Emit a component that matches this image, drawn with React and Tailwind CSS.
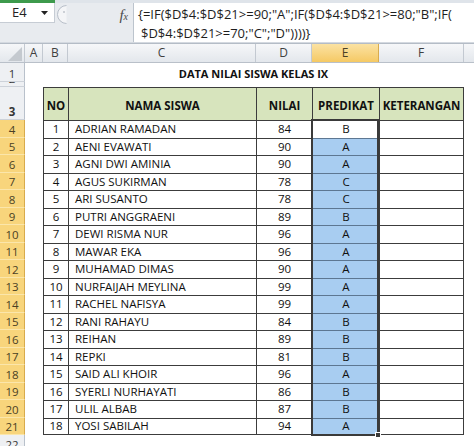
import React from 'react';

const FONT = "font-['Open_Sans','Liberation_Sans',sans-serif]";

const students = [
  [1, 'ADRIAN RAMADAN', 84, 'B'],
  [2, 'AENI EVAWATI', 90, 'A'],
  [3, 'AGNI DWI AMINIA', 90, 'A'],
  [4, 'AGUS SUKIRMAN', 78, 'C'],
  [5, 'ARI SUSANTO', 78, 'C'],
  [6, 'PUTRI ANGGRAENI', 89, 'B'],
  [7, 'DEWI RISMA NUR', 96, 'A'],
  [8, 'MAWAR EKA', 96, 'A'],
  [9, 'MUHAMAD DIMAS', 90, 'A'],
  [10, 'NURFAIJAH MEYLINA', 99, 'A'],
  [11, 'RACHEL NAFISYA', 99, 'A'],
  [12, 'RANI RAHAYU', 84, 'B'],
  [13, 'REIHAN', 89, 'B'],
  [14, 'REPKI', 81, 'B'],
  [15, 'SAID ALI KHOIR', 96, 'A'],
  [16, 'SYERLI NURHAYATI', 86, 'B'],
  [17, 'ULIL ALBAB', 87, 'B'],
  [18, 'YOSI SABILAH', 94, 'A'],
];

const columns = [
  { key: 'A', w: 'w-[18px]' },
  { key: 'B', w: 'w-[25px]' },
  { key: 'C', w: 'w-[188px]' },
  { key: 'D', w: 'w-[56px]' },
  { key: 'E', w: 'w-[67px]', active: true },
  { key: 'F', w: 'w-[85px]' },
];

function RowHead({ n, active }) {
  return (
    <div
      className={`w-[25px] shrink-0 h-full flex items-end justify-center leading-[15px] text-[11.5px] overflow-hidden border-r border-b ${
        active
          ? 'bg-[#f8d57c] text-[#4a3f24] border-b-[#fbe6ab] border-r-[#d8ab4c]'
          : 'bg-[#eef0f3] text-[#363636] border-b-[#cdd2d9] border-r-[#b9c1cb]'
      }`}
    >
      {n}
    </div>
  );
}

function FormulaBar() {
  return (
    <div>
      <div className="h-[3px] flex">
        <div className="w-[55px] bg-[#3d9a4c]" />
        <div className="flex-1 bg-[#dfe4ea]" />
      </div>
      <div className="flex h-[39px] bg-[#e8ebef]">
        <div className="w-[55px] flex flex-col">
          <div className="h-[20px] bg-white flex items-center justify-between pl-[12px] pr-[6px] border-r border-b border-[#c6ccd4]">
            <span className="text-[13px] text-[#222]">E4</span>
            <svg width="7" height="4" viewBox="0 0 7 4">
              <path d="M0 0 L7 0 L3.5 4 Z" fill="#222" />
            </svg>
          </div>
        </div>
        <div className="w-[12px] flex items-start pt-[2px] pl-[2px]">
          <svg width="10" height="19" viewBox="0 0 10 19">
            <path d="M9.5 0.5 A9 9 0 0 0 9.5 18.5" fill="#f4f5f7" stroke="#b7bec8" />
            <circle cx="7" cy="7" r="0.8" fill="#9aa3ae" />
          </svg>
        </div>
        <div className="w-[66px] flex justify-end items-start pt-[5px] pr-[5px]">
          <span className="font-['Liberation_Serif',serif] italic text-[15px] leading-[15px] text-[#4a4a4a]">
            f<span className="text-[10px]">x</span>
          </span>
        </div>
        <div className="flex-1 bg-white border-l border-[#bcc4cd] pl-[4px] pt-[2px] text-[13px] leading-[19px] text-[#1e1e1e] whitespace-nowrap overflow-hidden">
          <div>{'{=IF($D$4:$D$21>=90;"A";IF($D$4:$D$21>=80;"B";IF('}</div>
          <div className="pl-[3px]">{'$D$4:$D$21>=70;"C";"D"))))}'}</div>
        </div>
      </div>
      <div className="h-[1px] bg-[#d4d9e0]" />
      <div className="h-[1px] bg-[#b4bcc6]" />
    </div>
  );
}

function ColumnHeaders() {
  return (
    <div className="flex h-[19px] border-b border-[#b9c0c9] text-[12px] text-[#3f3f3f]">
      <div className="w-[25px] shrink-0 bg-linear-to-b from-[#f6f7f9] to-[#e3e7ec] border-r border-[#c3c9d1] flex items-end justify-end pr-[2px] pb-[1px]">
        <svg width="14" height="14" viewBox="0 0 14 14">
          <path d="M14 0 L14 14 L0 14 Z" fill="#c4c9cf" />
        </svg>
      </div>
      {columns.map((c) => (
        <div
          key={c.key}
          className={`${c.w} shrink-0 flex items-center justify-center border-r ${
            c.active
              ? 'bg-linear-to-b from-[#fbe2a2] to-[#f5c963] border-[#d9ac4e] text-[#4a3f24]'
              : 'bg-linear-to-b from-[#f6f7f9] to-[#e3e7ec] border-[#c3c9d1]'
          }`}
        >
          {c.key}
        </div>
      ))}
      <div className="flex-1 bg-linear-to-b from-[#f6f7f9] to-[#e3e7ec]" />
    </div>
  );
}

function Sheet() {
  const line = 'border-[#3c3c3c]';
  return (
    <div className="relative text-[11.5px] text-[#111]">
      {/* row 1 */}
      <div className="flex h-[19px]">
        <RowHead n={1} />
        <div className="w-[18px] shrink-0" />
        <div className="w-[421px] shrink-0 flex items-end justify-center pb-[1.5px] leading-[15px] text-[11px] font-bold">
          DATA NILAI SISWA KELAS IX
        </div>
        <div className="flex-1" />
      </div>
      {/* row 2, squeezed to a sliver */}
      <div className="flex h-[5px]">
        <RowHead n={2} />
        <div className="flex-1" />
      </div>
      {/* row 3 header */}
      <div className="flex h-[33px] font-bold">
        <RowHead n={3} />
        <div className="w-[18px] shrink-0" />
        <div className={`w-[25px] shrink-0 border-l border-t ${line} bg-[#d7e4bd] flex items-end justify-center pb-[7px] leading-[15px]`}>NO</div>
        <div className={`w-[188px] shrink-0 border-l border-t ${line} bg-[#d7e4bd] flex items-end justify-center pb-[7px] leading-[15px]`}>NAMA SISWA</div>
        <div className={`w-[56px] shrink-0 border-l border-t ${line} bg-[#d7e4bd] flex items-end justify-center pb-[7px] leading-[15px]`}>NILAI</div>
        <div className={`w-[67px] shrink-0 border-l border-t ${line} bg-[#d7e4bd] flex items-end justify-center pb-[7px] leading-[15px]`}>PREDIKAT</div>
        <div className={`w-[85px] shrink-0 border-l border-r border-t ${line} bg-[#d7e4bd] flex items-end justify-center pb-[7px] leading-[15px]`}>KETERANGAN</div>
        <div className="flex-1" />
      </div>
      {/* data rows */}
      {students.map(([no, name, score, grade], i) => {
        const last = i === students.length - 1;
        const bottom = last ? 'border-b' : '';
        const cell = `shrink-0 h-full flex items-end leading-[15px] pb-[1.5px] border-l border-t ${line} ${bottom}`;
        return (
          <div key={no} className="flex h-[17.5px]">
            <RowHead n={i + 4} active />
            <div className="w-[18px] shrink-0" />
            <div className={`w-[25px] justify-center ${cell}`}>{no}</div>
            <div className={`w-[188px] pl-[6px] ${cell}`}>{name}</div>
            <div className={`w-[56px] justify-center ${cell}`}>{score}</div>
            <div
              className={`w-[67px] justify-center shrink-0 h-full flex items-end leading-[15px] pb-[1.5px] border-l border-t ${bottom} ${
                i === 0 ? 'bg-white border-[#3c3c3c]' : 'bg-[#a8cdf1] border-l-[#3c3c3c] border-t-[#5d7792] border-b-[#3c3c3c]'
              }`}
            >
              {grade}
            </div>
            <div className={`w-[85px] border-r ${cell}`} />
            <div className="flex-1" />
          </div>
        );
      })}
      {/* row 22 */}
      <div className="flex h-[17.5px]">
        <RowHead n={22} />
        <div className="flex-1" />
      </div>

      {/* selection outline E4:E21 */}
      <div className="absolute left-[311px] top-[56px] w-[68px] h-[317px] border-2 border-[#3a3a3a] pointer-events-none">
        <div className="absolute -right-[4px] -bottom-[4px] w-[6px] h-[6px] bg-[#3a3a3a] border border-white" />
      </div>
    </div>
  );
}

export default function App() {
  return (
    <div className={`w-[474px] h-[446px] overflow-hidden bg-white ${FONT}`}>
      <FormulaBar />
      <ColumnHeaders />
      <Sheet />
    </div>
  );
}
